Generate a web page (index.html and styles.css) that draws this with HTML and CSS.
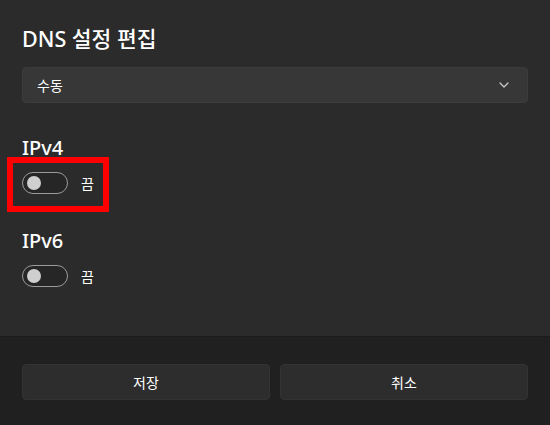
FILE: index.html
```html
<!DOCTYPE html>
<html lang="ko">
<head>
<meta charset="utf-8">
<link rel="stylesheet" href="styles.css">
</head>
<body>
<div class="dialog">
  <div class="content">
    <h1 class="title">DNS 설정 편집</h1>
    <div class="select"><span class="select-value">수동</span><svg class="chevron" width="10" height="6" viewBox="0 0 10 6"><path d="M1 1 L5 5 L9 1" fill="none" stroke="#cfcfcf" stroke-width="1.2" stroke-linecap="round" stroke-linejoin="round"/></svg></div>
    <div class="section">
      <h2 class="section-title">IPv4</h2>
      <div class="toggle-row">
        <span class="toggle"><span class="knob"></span></span>
        <span class="toggle-label">끔</span>
        <span class="highlight"></span>
      </div>
    </div>
    <div class="section">
      <h2 class="section-title">IPv6</h2>
      <div class="toggle-row">
        <span class="toggle"><span class="knob"></span></span>
        <span class="toggle-label">끔</span>
      </div>
    </div>
  </div>
  <div class="footer">
    <button class="btn">저장</button>
    <button class="btn">취소</button>
  </div>
</div>
</body>
</html>
```

FILE: styles.css
```css
* { box-sizing: border-box; }
html, body {
  margin: 0;
  padding: 0;
  background: #2b2b2b;
  font-family: "Noto Sans", "Noto Sans CJK KR", sans-serif;
  color: #ffffff;
}
.dialog {
  width: 550px;
  height: 425px;
  display: flex;
  flex-direction: column;
}
.content {
  flex: 1;
  padding: 24px 22px 0 22px;
}
.title {
  margin: 0;
  font-size: 21.5px;
  font-weight: 500;
  line-height: 30px;
}
.select {
  margin-top: 13px;
  height: 36px;
  background: #373737;
  border: 1px solid #3c3c3c;
  border-radius: 4px;
  display: flex;
  align-items: center;
  justify-content: space-between;
  padding: 0 18px 0 14px;
}
.select-value {
  font-family: "Noto Sans CJK KR", sans-serif;
  font-size: 14px;
  color: #ffffff;
}
.chevron { display: block; }
.section-title {
  margin: 0;
  font-size: 20px;
  font-weight: 500;
  line-height: 30px;
}
.select + .section { margin-top: 30px; }
.section + .section { margin-top: 32px; }
.toggle-row {
  position: relative;
  display: flex;
  align-items: center;
  gap: 13px;
  margin-top: 9px;
  height: 22px;
}
.toggle {
  width: 46px;
  height: 22px;
  border: 1px solid #9b9b9b;
  border-radius: 11px;
  background: #262626;
  display: flex;
  align-items: center;
  padding-left: 4px;
}
.knob {
  width: 14px;
  height: 14px;
  border-radius: 50%;
  background: #cfcfcf;
}
.toggle-label {
  font-family: "Noto Sans CJK KR", sans-serif;
  font-size: 14px;
  color: #ffffff;
}
.highlight {
  position: absolute;
  left: -15px;
  top: -15px;
  width: 102px;
  height: 55px;
  border: 6px solid #ff0000;
}
.footer {
  height: 89px;
  background: #202020;
  border-top: 1px solid #1c1c1c;
  padding: 27px 22px 0 22px;
  display: grid;
  grid-template-columns: 1fr 1fr;
  column-gap: 10px;
  align-content: start;
}
.btn {
  height: 36px;
  background: #2d2d2d;
  border: 1px solid #333333;
  border-radius: 4px;
  color: #ffffff;
  font-family: "Noto Sans CJK KR", sans-serif;
  font-size: 14px;
  padding: 0;
}
```
